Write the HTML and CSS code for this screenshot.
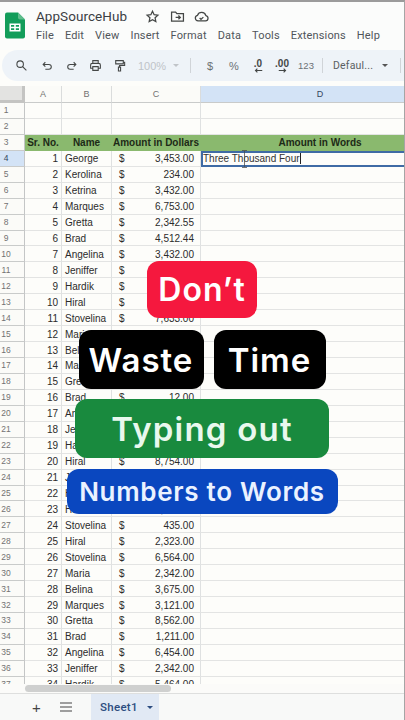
FILE: index.html
```html
<!DOCTYPE html>
<html lang="en">
<head>
    <meta charset="UTF-8">
    <title>AppSourceHub</title>
    <link rel="stylesheet" href="styles.css">
</head>
<body>

    <!-- Title and menu -->
    <div class="topbar">
        <svg class="logo" viewBox="0 0 20 26">
            <path d="M2 0h11l7 7v17a2 2 0 0 1-2 2H2a2 2 0 0 1-2-2V2a2 2 0 0 1 2-2z" fill="#129d5a"/>
            <path d="M13 0l7 7h-5a2 2 0 0 1-2-2z" fill="#5fbd8c"/>
            <path d="M4.500 11h11v8h-11z M6 12.500v1.800h3.200v-1.800z M10.800 12.500v1.800H14v-1.800z M6 15.800v1.800h3.200v-1.800z M10.800 15.800v1.800H14v-1.800z" fill="#fff" fill-rule="evenodd"/>
        </svg>
        <div class="titles">
            <div class="title-row">
                <span class="doc-name">AppSourceHub</span>
                <div class="doc-icons">
                    <svg viewBox="0 0 24 24"><path d="M12 3.500l2.600 5.600 6 .7-4.500 4.100 1.200 6L12 17l-5.300 2.900 1.200-6-4.500-4.100 6-.7z"/></svg>
                    <svg viewBox="0 0 24 24"><path d="M2.500 5h6.500l2 2.500h10.500v12h-19z M9 13.500h7 M13.500 10.500l3 3-3 3"/></svg>
                    <svg viewBox="0 0 24 24"><path d="M6.500 19a4.500 4.500 0 0 1-.8-8.900A7 7 0 0 1 19 10.500a4.300 4.300 0 0 1-.5 8.500z M9 14.500l2.200 2 3.800-3.500"/></svg>
                </div>
            </div>
            <div class="menu">
                <span>File</span><span>Edit</span><span>View</span><span>Insert</span><span>Format</span><span>Data</span><span>Tools</span><span>Extensions</span><span>Help</span>
            </div>
        </div>
    </div>

    <!-- Toolbar -->
    <div class="toolbar">
        <div class="tool first"><svg viewBox="0 0 24 24"><circle cx="9.500" cy="9.500" r="6"/><path d="M14 14l7 7"/></svg></div>
        <div class="tool"><svg viewBox="0 0 24 24"><path d="M8 6L4 10l4 4 M4.500 10h10a4.500 4.500 0 0 1 0 9H8"/></svg></div>
        <div class="tool"><svg viewBox="0 0 24 24"><path d="M16 6l4 4-4 4 M19.500 10h-10a4.500 4.500 0 0 0 0 9H16"/></svg></div>
        <div class="tool"><svg viewBox="0 0 24 24"><path d="M7 8V3h10v5 M7 17H3v-6a3 3 0 0 1 3-3h12a3 3 0 0 1 3 3v6h-4 M7 14h10v7H7z"/></svg></div>
        <div class="tool"><svg viewBox="0 0 24 24"><path d="M5 3h14v6H5z M19 6h2.500v6H12v3 M10 15h4v7h-4z"/></svg></div>
        <span class="zoom-value">100%</span>
        <span class="caret faint"></span>
        <span class="divider first-div"></span>
        <div class="tool txt">$</div>
        <div class="tool txt">%</div>
        <div class="tool txt dec">.0<svg viewBox="0 0 12 6"><path d="M11 3H2 M4.500 .5L2 3l2.500 2.500"/></svg></div>
        <div class="tool txt dec">.00<svg viewBox="0 0 12 6"><path d="M1 3h9 M7.500 .5L10 3 7.500 5.500"/></svg></div>
        <div class="tool txt small">123</div>
        <span class="divider second-div"></span>
        <span class="font-name">Defaul...</span>
        <span class="caret"></span>
        <span class="divider last-div"></span>
    </div>

    <!-- Sheet -->
    <div class="grid">
        <table>
            <colgroup><col class="c0"><col class="c1"><col class="c2"><col class="c3"><col class="c4"></colgroup>
            <tr class="cols"><th class="corner"></th><th>A</th><th>B</th><th>C</th><th class="on">D</th></tr>
            <tr><th>1</th><td></td><td></td><td></td><td></td></tr>
            <tr><th>2</th><td></td><td></td><td></td><td></td></tr>
            <tr class="head"><th>3</th><td>Sr. No.</td><td>Name</td><td>Amount in Dollars</td><td>Amount in Words</td></tr>
            <tr><th class="on">4</th><td class="num">1</td><td>George</td><td class="amt"><span>$</span>3,453.00</td><td class="active">Three Thousand Four<i class="cursor"></i></td></tr>
            <tr><th>5</th><td class="num">2</td><td>Kerolina</td><td class="amt"><span>$</span>234.00</td><td></td></tr>
            <tr><th>6</th><td class="num">3</td><td>Ketrina</td><td class="amt"><span>$</span>3,432.00</td><td></td></tr>
            <tr><th>7</th><td class="num">4</td><td>Marques</td><td class="amt"><span>$</span>6,753.00</td><td></td></tr>
            <tr><th>8</th><td class="num">5</td><td>Gretta</td><td class="amt"><span>$</span>2,342.55</td><td></td></tr>
            <tr><th>9</th><td class="num">6</td><td>Brad</td><td class="amt"><span>$</span>4,512.44</td><td></td></tr>
            <tr><th>10</th><td class="num">7</td><td>Angelina</td><td class="amt"><span>$</span>3,432.00</td><td></td></tr>
            <tr><th>11</th><td class="num">8</td><td>Jeniffer</td><td class="amt"><span>$</span>5,464.00</td><td></td></tr>
            <tr><th>12</th><td class="num">9</td><td>Hardik</td><td class="amt"><span>$</span>3,432.00</td><td></td></tr>
            <tr><th>13</th><td class="num">10</td><td>Hiral</td><td class="amt"><span>$</span>2,323.00</td><td></td></tr>
            <tr><th>14</th><td class="num">11</td><td>Stovelina</td><td class="amt"><span>$</span>7,633.00</td><td></td></tr>
            <tr><th>15</th><td class="num">12</td><td>Maria</td><td class="amt"><span>$</span>2,342.00</td><td></td></tr>
            <tr><th>16</th><td class="num">13</td><td>Belina</td><td class="amt"><span>$</span>3,675.00</td><td></td></tr>
            <tr><th>17</th><td class="num">14</td><td>Marques</td><td class="amt"><span>$</span>3,121.00</td><td></td></tr>
            <tr><th>18</th><td class="num">15</td><td>Gretta</td><td class="amt"><span>$</span>8,562.00</td><td></td></tr>
            <tr><th>19</th><td class="num">16</td><td>Brad</td><td class="amt"><span>$</span>12.00</td><td></td></tr>
            <tr><th>20</th><td class="num">17</td><td>Angelina</td><td class="amt"><span>$</span>6,454.00</td><td></td></tr>
            <tr><th>21</th><td class="num">18</td><td>Jeniffer</td><td class="amt"><span>$</span>2,342.00</td><td></td></tr>
            <tr><th>22</th><td class="num">19</td><td>Hardik</td><td class="amt"><span>$</span>5,464.00</td><td></td></tr>
            <tr><th>23</th><td class="num">20</td><td>Hiral</td><td class="amt"><span>$</span>8,754.00</td><td></td></tr>
            <tr><th>24</th><td class="num">21</td><td>Jeniffer</td><td class="amt"><span>$</span>3,432.00</td><td></td></tr>
            <tr><th>25</th><td class="num">22</td><td>Hardik</td><td class="amt"><span>$</span>2,323.00</td><td></td></tr>
            <tr><th>26</th><td class="num">23</td><td>Hiral</td><td class="amt"><span>$</span>6,564.00</td><td></td></tr>
            <tr><th>27</th><td class="num">24</td><td>Stovelina</td><td class="amt"><span>$</span>435.00</td><td></td></tr>
            <tr><th>28</th><td class="num">25</td><td>Hiral</td><td class="amt"><span>$</span>2,323.00</td><td></td></tr>
            <tr><th>29</th><td class="num">26</td><td>Stovelina</td><td class="amt"><span>$</span>6,564.00</td><td></td></tr>
            <tr><th>30</th><td class="num">27</td><td>Maria</td><td class="amt"><span>$</span>2,342.00</td><td></td></tr>
            <tr><th>31</th><td class="num">28</td><td>Belina</td><td class="amt"><span>$</span>3,675.00</td><td></td></tr>
            <tr><th>32</th><td class="num">29</td><td>Marques</td><td class="amt"><span>$</span>3,121.00</td><td></td></tr>
            <tr><th>33</th><td class="num">30</td><td>Gretta</td><td class="amt"><span>$</span>8,562.00</td><td></td></tr>
            <tr><th>34</th><td class="num">31</td><td>Brad</td><td class="amt"><span>$</span>1,211.00</td><td></td></tr>
            <tr><th>35</th><td class="num">32</td><td>Angelina</td><td class="amt"><span>$</span>6,454.00</td><td></td></tr>
            <tr><th>36</th><td class="num">33</td><td>Jeniffer</td><td class="amt"><span>$</span>2,342.00</td><td></td></tr>
            <tr><th>37</th><td class="num">34</td><td>Hardik</td><td class="amt"><span>$</span>5,464.00</td><td></td></tr>
        </table>
    </div>

    <div class="scrollbar"><div class="thumb"></div></div>

    <!-- Sheet tabs -->
    <div class="tabs">
        <span class="tab-btn plus">+</span>
        <svg class="tab-btn lines" viewBox="0 0 12 10"><path d="M0 1h12 M0 5h12 M0 9h12"/></svg>
        <div class="tab">Sheet1<span class="caret blue"></span></div>
    </div>

    <!-- Caption over the sheet -->
    <div class="caption">
        <div class="pill red">Don’t</div>
        <div class="pill-row">
            <div class="pill black waste">Waste</div>
            <div class="pill black time">Time</div>
        </div>
        <div class="pill green">Typing out</div>
        <div class="pill blue-pill">Numbers to Words</div>
    </div>

</body>
</html>
```

FILE: styles.css
```css
* {
    box-sizing: border-box;
}

body {
    margin: 0;
    width: 405px;
    height: 720px;
    overflow: hidden;
    position: relative;
    display: flex;
    flex-direction: column;
    background: #fdfdfa;
    color: #333;
    font-family: 'Liberation Sans', sans-serif;
    border-top: 2px solid #9b9b9b;
    border-right: 1px solid #a5a5a5;
}

/* Title and menu */
.topbar {
    display: flex;
    height: 48px;
    padding: 6px 0 0 5px;
    background: #fbfcfb;
}

.logo {
    width: 20px;
    height: 27px;
    margin-top: 4px;
}

.titles {
    margin-left: 11px;
}

.title-row {
    display: flex;
    align-items: center;
    height: 16px;
}

.doc-name {
    font-family: 'Roboto', sans-serif;
    font-size: 13.5px;
    letter-spacing: .05px;
    color: #3c4043;
}

.doc-icons {
    display: flex;
    gap: 9.5px;
    margin-left: 18px;
}

.doc-icons svg {
    width: 15px;
    height: 15px;
    fill: none;
    stroke: #444746;
    stroke-width: 2;
}

.menu {
    display: flex;
    gap: 11px;
    margin-top: 5px;
    font-family: 'Roboto', sans-serif;
    font-size: 11px;
    letter-spacing: .15px;
    color: #50555a;
}

/* Toolbar */
.toolbar {
    display: flex;
    align-items: center;
    height: 31px;
    margin-left: 2px;
    padding-left: 7px;
    background: #eef3f8;
    border-radius: 16px 0 0 16px;
    color: #5a5f63;
    font-size: 11px;
}

.tool {
    flex: none;
    width: 24px;
    display: flex;
    align-items: center;
    justify-content: center;
}

.tool.first {
    margin-right: 2px;
}

.tool svg {
    width: 13px;
    height: 13px;
    fill: none;
    stroke: #444746;
    stroke-width: 2;
}

.txt {
    font-size: 11px;
    color: #6b7074;
}

.small {
    font-size: 9.5px;
}

.dec {
    flex-direction: column;
    font-size: 10px;
    font-weight: bold;
    line-height: 9px;
    color: #444746;
}

.dec svg {
    width: 9px;
    height: 5px;
    stroke-width: 1.500;
}

.zoom-value {
    width: 32px;
    margin-left: 7px;
    color: #c0c4c8;
    font-size: 11px;
}

.caret {
    display: inline-block;
    width: 0;
    height: 0;
    border: 3px solid transparent;
    border-top: 3.500px solid #555;
    border-bottom: 0;
}

.caret.faint {
    margin-left: 3px;
    border-top-color: #c0c4c8;
}

.divider {
    width: 1px;
    height: 15px;
    background: #d0d4d8;
}

.first-div {
    margin: 0 7px 0 11px;
}

.second-div {
    margin: 0 4px 0 4px;
}

.font-name {
    width: 47px;
    margin-left: 6px;
    font-family: 'Roboto', sans-serif;
    font-size: 10.5px;
    letter-spacing: .2px;
}

.font-name + .caret {
    margin-left: 2px;
}

.last-div {
    margin-left: 12px;
}

/* Sheet */
.grid {
    height: 598px;
    margin-top: 5px;
    overflow: hidden;
}

table {
    width: 440px;
    table-layout: fixed;
    border-collapse: separate;
    border-spacing: 0;
    font-size: 10px;
    color: #2b2b2b;
}

.c0 { width: 25px; }
.c1 { width: 37px; }
.c2 { width: 50px; }
.c3 { width: 89px; }
.c4 { width: 239px; }

tr {
    height: 15.95px;
}

td {
    padding: 1px 3px 0;
    white-space: nowrap;
    border-right: 1px solid #dfe1e1;
    border-bottom: 1px solid #e3e4e3;
    background: #fdfdfa;
    overflow: hidden;
}

th {
    padding: 0 12px 0 0;
    font-size: 8.500px;
    font-weight: normal;
    color: #727272;
    background: #fbfbf8;
    border-right: 1px solid #c4c6c6;
    border-bottom: 1px solid #c9cbca;
}

.cols {
    height: 17px;
}

.cols th {
    padding: 0;
    font-size: 9px;
    border-right: 1px solid #dadcdc;
    border-bottom: 1px solid #c9cbca;
}

.cols .corner {
    background: #e3e3e1;
    border-right: 3px solid #c4c4c2;
    border-bottom: 3px solid #c4c4c2;
}

th.on,
.cols th.on {
    background: #d3e3f6;
    color: #33475e;
}

.head td {
    padding: 1px 0 0;
    text-align: center;
    font-weight: bold;
    color: #1d2a17;
    background: #8ab96e;
    border-color: #8ab96e;
}

.num {
    text-align: right;
}

.amt {
    padding: 1px 6px 0 7px;
    text-align: right;
}

.amt span {
    float: left;
}

td.active {
    position: relative;
    padding: 0;
    color: #333;
    border: 2px solid #3f6ba5;
    overflow: visible;
}

.cursor {
    display: inline-block;
    width: 1px;
    height: 11px;
    vertical-align: -2px;
    background: #222;
}

/* I-beam mouse pointer left over the cell text */
.active::after {
    content: "";
    position: absolute;
    left: 39px;
    top: -3px;
    width: 5px;
    height: 16px;
    background: linear-gradient(#4a4a4a, #4a4a4a) center / 1px 100% no-repeat;
    border-top: 1px solid #4a4a4a;
    border-bottom: 1px solid #4a4a4a;
    opacity: .75;
}

.scrollbar {
    height: 10px;
    padding: 1px 0 0 25px;
    border-bottom: 1px solid #dedfde;
    background: #fbfbf9;
}

.thumb {
    width: 146px;
    height: 7px;
    border-radius: 4px;
    background: #cfd0cf;
}

/* Sheet tabs */
.tabs {
    flex: 1;
    display: flex;
    align-items: center;
    background: #f8f9f8;
}

.tab-btn {
    flex: none;
    color: #444;
}

.plus {
    width: 13px;
    margin-left: 30px;
    text-align: center;
    font-size: 15px;
}

.lines {
    width: 12px;
    height: 10px;
    margin-left: 17px;
    fill: none;
    stroke: #444;
    stroke-width: 1.200;
}

.tab {
    display: flex;
    align-items: center;
    align-self: stretch;
    width: 68px;
    margin-left: 19px;
    padding-left: 9px;
    background: #e1e9f4;
    color: #2d4d80;
    font-family: 'Roboto', sans-serif;
    font-size: 11.5px;
    font-weight: 500;
    letter-spacing: .3px;
}

.caret.blue {
    margin-left: 9px;
    border-top-color: #2d4d80;
}

/* Caption over the sheet */
.caption {
    position: absolute;
    top: 259px;
    left: 0;
    width: 404px;
    display: flex;
    flex-direction: column;
    align-items: center;
    font-family: 'Inter', sans-serif;
    font-weight: 600;
    color: #fff;
}

.pill {
    display: flex;
    align-items: center;
    justify-content: center;
    border-radius: 12px;
}

.red {
    width: 110px;
    height: 57px;
    background: #f5183e;
    font-size: 32px;
    letter-spacing: 1px;
}

.pill-row {
    display: flex;
    gap: 10px;
    margin-top: 12px;
}

.black {
    height: 59px;
    background: #000;
    font-size: 33px;
    letter-spacing: 1px;
}

.waste {
    width: 125px;
}

.time {
    width: 112px;
}

.green {
    width: 254px;
    height: 59px;
    margin-top: 10px;
    background: #198a3e;
    font-size: 33px;
    letter-spacing: 1.200px;
    color: #e9f8ee;
}

.blue-pill {
    width: 271px;
    height: 45px;
    margin-top: 11px;
    background: #0a47bf;
    font-size: 26px;
    letter-spacing: .7px;
    color: #eaf2ff;
}
```
